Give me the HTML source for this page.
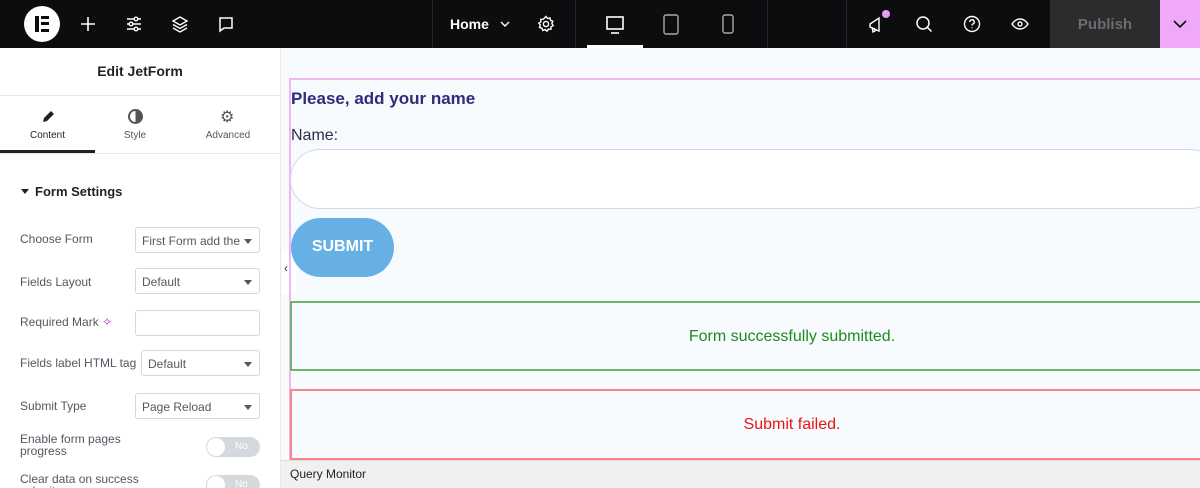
<!DOCTYPE html>
<html style="overflow:hidden"><head><meta charset="utf-8"><style>
*{box-sizing:border-box;margin:0;padding:0}
html,body{width:1200px;height:488px;overflow:hidden}
body{font-family:"Liberation Sans",sans-serif;background:#f7fbfe;position:relative}
.top{position:absolute;left:0;top:0;width:1200px;height:48px;background:#0c0d0e}
.sep{position:absolute;top:0;width:1px;height:48px;background:#26272a}
.ic{position:absolute}
.panel{position:absolute;left:0;top:48px;width:281px;height:440px;background:#fff;border-right:1px solid #e6e8ea;overflow:hidden}
.lbl{position:absolute;left:20px;font-size:12px;color:#515962}
.sel{position:absolute;left:135px;width:125px;height:26px;border:1px solid #d5d8dc;border-radius:3px;font-size:12px;color:#515962;padding:6px 6px;background:#fff;white-space:nowrap;overflow:hidden}
.sel.a:after{content:"";position:absolute;right:7px;top:11px;border:4px solid transparent;border-top:5px solid #515962}
.tog{position:absolute;left:206px;width:54px;height:20px;border-radius:10px;background:#d5d8dc;font-size:10px;color:#fff;padding:4px 0 0 29px}
.tog:before{content:"";position:absolute;left:1px;top:1px;width:18px;height:18px;border-radius:50%;background:#fff}
.can{font-family:"Liberation Sans",sans-serif}
</style></head><body>
<div class="top">
 <div style="position:absolute;left:24px;top:6px;width:36px;height:36px;border-radius:50%;background:#fff"></div>
 <div style="position:absolute;left:35px;top:16px;width:4px;height:16px;background:#0c0d0e"></div>
 <div style="position:absolute;left:41px;top:16px;width:8px;height:3px;background:#0c0d0e;box-shadow:0 6px 0 #0c0d0e,0 13px 0 #0c0d0e"></div>
 <svg class="ic" style="left:78px;top:14px" width="20" height="20" viewBox="0 0 20 20" stroke="#fff" stroke-width="1.6" fill="none"><path d="M10 3v14M3 10h14"/></svg>
 <svg class="ic" style="left:124px;top:14px" width="20" height="20" viewBox="0 0 20 20" stroke="#fff" stroke-width="1.4" fill="none"><path d="M3 5h14M3 10h14M3 15h14"/><circle cx="12" cy="5" r="1.8" fill="#0c0d0e"/><circle cx="7" cy="10" r="1.8" fill="#0c0d0e"/><circle cx="12" cy="15" r="1.8" fill="#0c0d0e"/></svg>
 <svg class="ic" style="left:170px;top:14px" width="20" height="20" viewBox="0 0 20 20" stroke="#fff" stroke-width="1.4" fill="none"><path d="M10 3l7 4-7 4-7-4zM3 10.5l7 4 7-4M3 14l7 4 7-4"/></svg>
 <svg class="ic" style="left:216px;top:14px" width="20" height="20" viewBox="0 0 20 20" stroke="#fff" stroke-width="1.5" fill="none"><path d="M4 4h12v10H8l-4 3z"/></svg>
 <div class="sep" style="left:432px"></div>
 <div style="position:absolute;left:450px;top:16px;color:#fff;font-size:14px;font-weight:bold">Home</div>
 <svg class="ic" style="left:498px;top:17px" width="14" height="14" viewBox="0 0 14 14" stroke="#fff" stroke-width="1.4" fill="none"><path d="M3 5l4 4 4-4"/></svg>
 <svg class="ic" style="left:536px;top:14px" width="20" height="20" viewBox="0 0 20 20" stroke="#fff" stroke-width="1.4" fill="none"><circle cx="10" cy="10" r="2.6"/><path d="M10 2.5l1.5 2 2.4-.6.6 2.4 2.3 1-.9 2.2 1.3 2.1-2.2 1.2-.1 2.5-2.5-.2-1.4 2.1-1.9-1.6-2.3.9-.9-2.3-2.4-.8.9-2.3-1.6-1.9 2.1-1.4-.1-2.5 2.5-.1z"/></svg>
 <div class="sep" style="left:575px"></div>
 <svg class="ic" style="left:604px;top:14px" width="22" height="22" viewBox="0 0 22 22" stroke="#fff" stroke-width="1.6" fill="none"><rect x="3" y="3" width="16" height="12"/><path d="M7 19h8"/></svg>
 <div style="position:absolute;left:587px;top:45px;width:56px;height:3px;background:#fff"></div>
 <svg class="ic" style="left:660px;top:12px" width="22" height="24" viewBox="0 0 22 24" stroke="#aaa" stroke-width="1.4" fill="none"><rect x="4" y="3" width="14" height="19" rx="2"/></svg>
 <svg class="ic" style="left:718px;top:13px" width="20" height="22" viewBox="0 0 20 22" stroke="#aaa" stroke-width="1.4" fill="none"><rect x="5" y="2" width="10" height="18" rx="2"/></svg>
 <div class="sep" style="left:767px"></div>
 <div class="sep" style="left:846px"></div>
 <svg class="ic" style="left:866px;top:13px" width="22" height="22" viewBox="0 0 22 22" stroke="#fff" stroke-width="1.4" fill="none"><path d="M4 11l9-6v13l-9-4zM6 14l1 5 2-1-1-3"/></svg>
 <div style="position:absolute;left:882px;top:10px;width:8px;height:8px;border-radius:50%;background:#ee9bf7"></div>
 <svg class="ic" style="left:914px;top:14px" width="20" height="20" viewBox="0 0 20 20" stroke="#fff" stroke-width="1.5" fill="none"><circle cx="9" cy="9" r="6"/><path d="M13.5 13.5l4 4"/></svg>
 <svg class="ic" style="left:962px;top:14px" width="20" height="20" viewBox="0 0 20 20" stroke="#fff" stroke-width="1.4" fill="none"><circle cx="10" cy="10" r="7.5"/><path d="M7.8 8a2.2 2.2 0 1 1 3 2c-.7.3-.8.8-.8 1.5M10 13.5v.8"/></svg>
 <svg class="ic" style="left:1010px;top:14px" width="20" height="20" viewBox="0 0 20 20" stroke="#fff" stroke-width="1.4" fill="none"><path d="M2 10s3-5 8-5 8 5 8 5-3 5-8 5-8-5-8-5z"/><circle cx="10" cy="10" r="2"/></svg>
 <div style="position:absolute;left:1050px;top:0;width:110px;height:48px;background:#2b2c2e;color:#6b6c6e;font-size:15px;font-weight:bold;text-align:center;padding-top:16px">Publish</div>
 <div style="position:absolute;left:1160px;top:0;width:40px;height:48px;background:#efa9f8"></div>
 <svg class="ic" style="left:1171px;top:16px" width="18" height="16" viewBox="0 0 18 16" stroke="#0c0d0e" stroke-width="1.6" fill="none"><path d="M3 5l6 6 6-6"/></svg>
</div>

<div class="panel">
 <div style="position:absolute;left:0;top:15px;width:280px;text-align:center;font-size:14px;font-weight:bold;color:#1f2124">Edit JetForm</div>
 <div style="position:absolute;left:0;top:47px;width:280px;height:1px;background:#e6e8ea"></div>
 <svg class="ic" style="left:40px;top:61px" width="16" height="16" viewBox="0 0 16 16"><path d="M3 13l1-4 7-7 3 3-7 7z" fill="#1f2124"/></svg>
 <div style="position:absolute;left:0;top:82px;width:95px;text-align:center;font-size:10px;color:#1f2124">Content</div>
 <div style="position:absolute;left:128px;top:61px;width:15px;height:15px;border-radius:50%;border:2px solid #555;background:linear-gradient(90deg,#fff 50%,#555 50%)"></div>
 <div style="position:absolute;left:95px;top:82px;width:80px;text-align:center;font-size:10px;color:#515962">Style</div>
 <div style="position:absolute;left:220px;top:59px;font-size:16px;color:#555">⚙</div>
 <div style="position:absolute;left:185px;top:82px;width:86px;text-align:center;font-size:10px;color:#515962">Advanced</div>
 <div style="position:absolute;left:0;top:102px;width:95px;height:3px;background:#1f2124"></div>
 <div style="position:absolute;left:0;top:105px;width:280px;height:1px;background:#e6e8ea"></div>
 <div style="position:absolute;left:21px;top:141px;border:4px solid transparent;border-top:5px solid #1f2124"></div>
 <div style="position:absolute;left:35px;top:136px;font-size:13px;font-weight:bold;color:#1f2124">Form Settings</div>
 <div class="lbl" style="top:184px">Choose Form</div><div class="sel a" style="top:179px">First Form add the</div>
 <div class="lbl" style="top:227px">Fields Layout</div><div class="sel a" style="top:220px">Default</div>
 <div class="lbl" style="top:267px">Required Mark <span style="color:#c71dd9">✧</span></div><div class="sel" style="top:262px"></div>
 <div class="lbl" style="top:308px">Fields label HTML tag</div><div class="sel a" style="top:302px;left:141px;width:119px">Default</div>
 <div class="lbl" style="top:351px">Submit Type</div><div class="sel a" style="top:345px">Page Reload</div>
 <div class="lbl" style="top:385px;line-height:12px">Enable form pages<br>progress</div><div class="tog" style="top:389px">No</div>
 <div class="lbl" style="top:425px;line-height:12px">Clear data on success<br>submit</div><div class="tog" style="top:427px">No</div>
</div>
<div style="position:absolute;left:281px;top:252px;width:15px;height:42px;background:#fff;font-size:12px;color:#333;padding:9px 0 0 3px">‹</div>

<div class="can">
 <div style="position:absolute;left:289px;top:78px;width:911px;height:382px;border-left:2px solid #efb8f5;border-top:2px solid #efb8f5"></div>
 <div style="position:absolute;left:291px;top:89px;font-size:17px;font-weight:bold;color:#2f2c7a">Please, add your name</div>
 <div style="position:absolute;left:291px;top:127px;font-size:16px;color:#2f2c4a">Name:</div>
 <div style="position:absolute;left:290px;top:149px;width:930px;height:60px;border:1px solid #cfd9e8;border-radius:30px;background:#fff"></div>
 <div style="position:absolute;left:291px;top:218px;width:103px;height:59px;border-radius:30px;background:#66b0e6;color:#fff;font-size:16px;font-weight:bold;text-align:center;padding-top:20px">SUBMIT</div>
 <div style="position:absolute;left:290px;top:301px;width:1004px;height:70px;border:2px solid #6ab86a;color:#1e8a1e;font-size:16px;text-align:center;padding-top:25px">Form successfully submitted.</div>
 <div style="position:absolute;left:290px;top:389px;width:1004px;height:71px;border:2px solid #f78486;color:#e81414;font-size:16px;text-align:center;padding-top:25px">Submit failed.</div>
 <div style="position:absolute;left:281px;top:460px;width:919px;height:28px;background:#f0f0f1;border-top:1px solid #ddd;font-size:12px;color:#222;padding:6px 0 0 9px">Query Monitor</div>
</div>
</body></html>
